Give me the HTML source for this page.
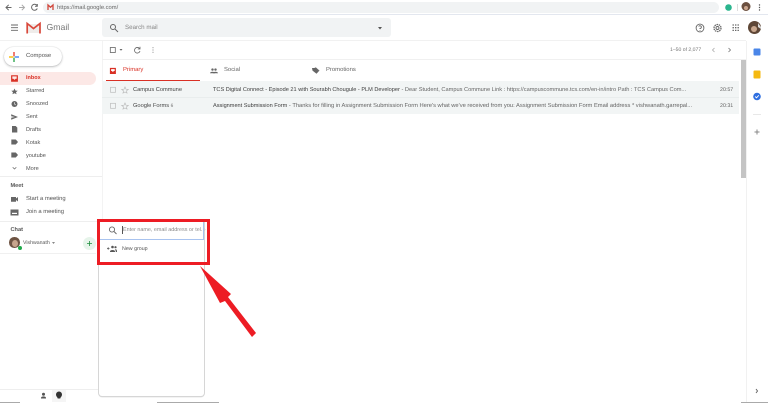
<!DOCTYPE html>
<html><head><meta charset="utf-8"><style>
html,body{margin:0;padding:0;width:768px;height:403px;overflow:hidden;background:#fff}
body{position:relative;font-family:"Liberation Sans",sans-serif;color:#555;text-rendering:geometricPrecision}
#w{position:absolute;left:0;top:0;width:768px;height:403px;filter:blur(.3px);overflow:hidden}
.a{position:absolute}
.t{position:absolute;white-space:nowrap;font-size:5.600px;line-height:8px;color:#555}
svg{position:absolute;overflow:visible}
</style></head><body><div id="w">
<!-- browser bar -->
<div class="a" style="left:43px;top:2px;width:676px;height:11px;background:#f1f3f4;border-radius:6px"></div>
<div class="a" style="left:0;top:14px;width:768px;height:1px;background:#e3e7ef"></div>
<svg width="768" height="15" style="left:0;top:0" fill="none" stroke="#666" stroke-width="1">
<path d="M11.500 7.500H6M8.700 4.800L6 7.500L8.700 10.200"/>
<path d="M19 7.500H24.500M21.800 4.800L24.500 7.500L21.800 10.200" stroke="#aaa"/>
<path d="M37 5.500A3 3 0 1 0 37.300 8.500M37.300 4V6.300H35"/>
<path d="M48 10V5L50.500 7.200L53 5V10" stroke="#d0453a" stroke-width="1.300"/>
<circle cx="728.500" cy="7.500" r="3.300" fill="#2bb58e" stroke="none"/>
<path d="M737.500 4V11" stroke="#ddd"/>
<circle cx="746" cy="6.500" r="4.500" fill="#6b5040" stroke="none"/>
<circle cx="746" cy="8" r="2" fill="#caa68e" stroke="none"/>
<circle cx="759.500" cy="5" r=".7" fill="#555" stroke="none"/><circle cx="759.500" cy="7.500" r=".7" fill="#555" stroke="none"/><circle cx="759.500" cy="10" r=".7" fill="#555" stroke="none"/>
</svg>
<div class="t" style="left:57px;top:3.500px;font-size:5.800px;color:#666">https://mail.google.com/</div>
<!-- header -->
<svg width="60" height="20" style="left:0;top:18px" fill="none">
<path d="M11 7H18M11 9.700H18M11 12.300H18" stroke="#666" stroke-width=".9"/>
<path d="M27 15V6H40V15Z" fill="#efecea"/>
<path d="M27.200 15.500V5.500L33.500 10.500L40 5.500V15.500" stroke="#d9483b" stroke-width="1.700"/>
</svg>
<div class="t" style="left:46.500px;top:22px;font-size:8.700px;line-height:11px;color:#777">Gmail</div>
<div class="a" style="left:102px;top:18px;width:289px;height:19px;background:#f1f3f4;border-radius:3px"></div>
<svg width="12" height="12" style="left:107.500px;top:21.500px" fill="none" stroke="#666" stroke-width="1"><circle cx="5" cy="5" r="2.500"/><path d="M7 7L10 10"/></svg>
<div class="t" style="left:125px;top:24px;font-size:6.200px;color:#888">Search mail</div>
<svg width="6" height="4" style="left:377.500px;top:26.500px"><path d="M0 0H4L2 2.500Z" fill="#555"/></svg>
<svg width="80" height="20" style="left:690px;top:18px" fill="none" stroke="#666" stroke-width=".9">
<circle cx="10" cy="10" r="3.900"/><path d="M8.700 8.500A1.400 1.400 0 1 1 10 10.500V11M10 12V12.800"/>
<circle cx="27.500" cy="10" r="1.500"/><circle cx="27.500" cy="10" r="3.500" stroke-dasharray="1.500 .7" stroke-width="1.300"/>
<path d="M42.500 7h1.400M45 7h1.400M47.500 7h1.400M42.500 9.700h1.400M45 9.700h1.400M47.500 9.700h1.400M42.500 12.400h1.400M45 12.400h1.400M47.500 12.400h1.400" stroke-width="1.300"/>
<circle cx="64.500" cy="9.500" r="6.500" fill="#5e4636" stroke="none"/>
<circle cx="64" cy="11" r="3" fill="#c9a78e" stroke="none"/>
<path d="M68 5L71 9V11L68 9Z" fill="#ddd" stroke="none"/>
</svg>
<div class="a" style="left:0;top:40px;width:746px;height:1px;background:#f1f1f1"></div>
<!-- sidebar -->
<div class="a" style="left:3.500px;top:47px;width:58px;height:19px;border-radius:10px;background:#fff;box-shadow:0 1px 2px rgba(60,64,67,.3),0 0 1px rgba(60,64,67,.3)"></div>
<svg width="10" height="10" style="left:9.300px;top:51.500px"><path d="M4.300 0h1.400v4.300H4.300z" fill="#ea4335"/><path d="M5.700 4.300H10v1.400H5.700z" fill="#4285f4"/><path d="M4.300 5.700h1.400V10H4.300z" fill="#34a853"/><path d="M0 4.300h4.300v1.400H0z" fill="#fbbc05"/></svg>
<div class="t" style="left:26px;top:52px;font-size:5.900px;color:#555">Compose</div>
<div class="a" style="left:0;top:72px;width:96px;height:13px;background:#fce8e6;border-radius:0 7px 7px 0"></div>
<svg width="18" height="190" style="left:6.800px;top:70px">
<path d="M4.700 5.800H10.300V11.200H4.700Z" fill="none" stroke="#d93025" stroke-width="1.200"/><path d="M4.700 8.800H6.300L7.500 9.900L8.700 8.800H10.300V11.200H4.700Z" fill="#d93025"/>
<path d="M7.500 18.500L8.500 20.600L10.700 20.800L9 22.200L9.600 24.300L7.500 23.200L5.400 24.300L6 22.200L4.300 20.800L6.500 20.600Z" fill="#666"/>
<circle cx="7.500" cy="34" r="3" fill="#666"/><path d="M7.500 32.300V34L8.700 35" stroke="#fff" stroke-width=".6" fill="none"/>
<path d="M4.200 44.300L11 47L4.200 49.700V47.800L8 47L4.200 46.200Z" fill="#666"/>
<path d="M5 56H8.700L10.300 57.600V62.500H5Z" fill="#666"/>
<path d="M4.300 69.500H8.800L11 72L8.800 74.500H4.300Z" fill="#666"/>
<path d="M4.300 82.500H8.800L11 85L8.800 87.500H4.300Z" fill="#666"/>
<path d="M5.700 97.200L7.500 99L9.300 97.200" fill="none" stroke="#666" stroke-width=".7"/>
<path d="M4 127H9V128.500L11 127V131.500L9 130V131.800H4Z" fill="#666"/>
<path d="M3.500 139.500H11.500V145.500H3.500Z" fill="#666"/><path d="M5 142.800H10V144H5Z" fill="#fff"/>
</svg>
<div class="t" style="left:26px;top:74px;font-weight:bold;color:#d93025;font-size:5.500px">Inbox</div>
<div class="t" style="left:26px;top:87px">Starred</div>
<div class="t" style="left:26px;top:100px">Snoozed</div>
<div class="t" style="left:26px;top:113px">Sent</div>
<div class="t" style="left:26px;top:126px">Drafts</div>
<div class="t" style="left:26px;top:138.500px">Kotak</div>
<div class="t" style="left:26px;top:151.500px">youtube</div>
<div class="t" style="left:26px;top:164.500px">More</div>
<div class="a" style="left:0;top:176px;width:102px;height:1px;background:#eee"></div>
<div class="t" style="left:10.500px;top:181.500px;font-weight:bold;color:#555">Meet</div>
<div class="t" style="left:26px;top:195px;font-size:5.850px">Start a meeting</div>
<div class="t" style="left:26px;top:208px;font-size:5.850px">Join a meeting</div>
<div class="a" style="left:0;top:221px;width:102px;height:1px;background:#eee"></div>
<div class="t" style="left:10.500px;top:226px;font-weight:bold;color:#555">Chat</div>
<div class="a" style="left:9.300px;top:237px;width:10.500px;height:10.500px;border-radius:50%;background:#6e5443"></div>
<div class="a" style="left:12px;top:240px;width:6px;height:7px;border-radius:50%;background:#c7a58d"></div>
<div class="a" style="left:17.500px;top:245.500px;width:4px;height:4px;border-radius:50%;background:#1fa94a"></div>
<div class="t" style="left:23px;top:238.700px;font-size:5.200px">Vishwanath</div>
<svg width="4" height="3" style="left:51.500px;top:242px"><path d="M0 0H3L1.500 2Z" fill="#888"/></svg>
<div class="a" style="left:83px;top:237px;width:13px;height:13px;border-radius:50%;background:#e6f4ea"></div>
<svg width="7" height="7" style="left:86px;top:240px"><path d="M3.500 1V6M1 3.500H6" stroke="#1e8e3e" stroke-width=".8"/></svg>
<div class="a" style="left:0;top:253px;width:96px;height:1px;background:#f0f0f0"></div>
<div class="a" style="left:102px;top:41px;width:1px;height:185px;background:#f3f3f3"></div>
<!-- toolbar -->
<svg width="60" height="14" style="left:106px;top:43px" fill="none" stroke="#666">
<rect x="4.300" y="4.500" width="5" height="5" stroke-width=".8"/>
<path d="M13.500 6H16.500L15 7.700Z" fill="#666" stroke="none"/>
<path d="M33.500 5.500A2.800 2.800 0 1 0 34 8M34 3.800V6H31.800" stroke-width=".8"/>
<circle cx="47" cy="4.700" r=".5" fill="#666" stroke="none"/><circle cx="47" cy="7" r=".5" fill="#666" stroke="none"/><circle cx="47" cy="9.300" r=".5" fill="#666" stroke="none"/>
</svg>
<div class="a" style="left:102px;top:59px;width:644px;height:1px;background:#f0f0f0"></div>
<div class="t" style="left:670px;top:46px;font-size:5.100px;color:#777">1–50 of 2,077</div>
<svg width="50" height="10" style="left:705px;top:45px" fill="none" stroke="#777" stroke-width=".8"><path d="M9.500 3L7.500 5L9.500 7" stroke="#aaa"/><path d="M23.500 3L25.500 5L23.500 7"/></svg>
<!-- tabs -->
<svg width="240" height="12" style="left:105px;top:66px">
<path d="M5.500 2.500H10.300V7.400H5.500Z" fill="none" stroke="#d93025" stroke-width="1.200"/><path d="M5.500 5H6.900L7.900 6L8.900 5H10.300V7.400H5.500Z" fill="#d93025"/>
<g fill="#666"><circle cx="107.500" cy="3.600" r="1.200"/><circle cx="110.500" cy="3.600" r="1.200"/><path d="M105 7.300C105 5.300 110 5.300 110 7.300Z"/><path d="M108 7.300C108 5.300 113 5.300 113 7.300Z"/>
<path d="M207 2H210.500L213.800 5.300L211.500 7.800L207.500 4.600Z"/><path d="M209.500 1.500H211L214.500 4.600L213.800 5.300Z"/></g>
</svg>
<div class="t" style="left:123px;top:66px;color:#d93025;font-size:5.900px">Primary</div>
<div class="t" style="left:224px;top:66px;color:#666;font-size:5.900px">Social</div>
<div class="t" style="left:326px;top:66px;color:#666;font-size:5.900px">Promotions</div>
<div class="a" style="left:106px;top:80px;width:93.500px;height:1.200px;background:#d93025"></div>
<!-- rows -->
<div class="a" style="left:102px;top:81px;width:637px;height:16px;background:#f2f5f5;border-bottom:1px solid #e9eded"></div>
<div class="a" style="left:102px;top:98px;width:637px;height:15.500px;background:#f2f5f5"></div>
<svg width="30" height="40" style="left:106px;top:82px" fill="none" stroke="#bbb" stroke-width=".7">
<rect x="4.500" y="5.300" width="5" height="5"/><rect x="4.500" y="21.300" width="5" height="5"/>
<path d="M19 5L20 7.200L22.300 7.400L20.500 8.900L21 11.100L19 10L17 11.100L17.500 8.900L15.700 7.400L18 7.200Z"/>
<path d="M19 21L20 23.200L22.300 23.400L20.500 24.900L21 27.100L19 26L17 27.100L17.500 24.900L15.700 23.400L18 23.200Z"/>
</svg>
<div class="t" style="left:133px;top:85.500px;color:#444;font-size:5.700px">Campus Commune</div>
<div class="t" style="left:133px;top:101.500px;color:#444;font-size:5.700px">Google Forms <span style="font-size:4.800px;color:#777">6</span></div>
<div class="t" style="left:213px;top:85.500px;color:#666;font-size:5.670px"><span style="color:#3c3c3c;font-size:5.600px">TCS Digital Connect - Episode 21 with Sourabh Chougule - PLM Developer</span> - Dear Student, Campus Commune Link : https://campuscommune.tcs.com/en-in/intro Path : TCS Campus Com...</div>
<div class="t" style="left:213px;top:101.500px;color:#666;font-size:5.760px"><span style="color:#3c3c3c;font-size:5.600px">Assignment Submission Form</span> - Thanks for filling in Assignment Submission Form Here's what we've received from you: Assignment Submission Form Email address * vishwanath.garrepal...</div>
<div class="t" style="left:720px;top:85.500px;font-size:5.300px;color:#666">20:57</div>
<div class="t" style="left:720px;top:101.500px;font-size:5.300px;color:#666">20:31</div>
<!-- scrollbar & right panel -->
<div class="a" style="left:741px;top:60px;width:5px;height:118px;background:#c4c4c4"></div>
<div class="a" style="left:746px;top:41px;width:1px;height:362px;background:#f1f1f1"></div>
<svg width="22" height="360" style="left:746px;top:41px" fill="none">
<rect x="7.500" y="7.500" width="7" height="7" rx="1" fill="#4a86e8"/>
<rect x="7.500" y="29.500" width="7" height="8" rx="1" fill="#f5b910"/>
<circle cx="11" cy="55.500" r="3.800" fill="#2f6fe0"/><path d="M9.200 55.500L10.500 56.800L12.800 54.300" stroke="#fff" stroke-width=".9"/>
<path d="M7 73.500H15" stroke="#e8e8e8"/>
<path d="M11 88.500V93.500M8.500 91H13.500" stroke="#888"/>
<path d="M10 348L11.500 350L10 352" stroke="#666"/>
</svg>
<!-- bottom strip -->
<div class="a" style="left:0;top:389px;width:98px;height:1px;background:#eee"></div>
<div class="a" style="left:52px;top:390px;width:14px;height:12px;background:#f5f5f5"></div>
<svg width="30" height="12" style="left:38px;top:390px" fill="#555"><circle cx="5.500" cy="4.200" r="1.500"/><path d="M3 8C3 5.800 8 5.800 8 8V8.500H3Z"/><path d="M18 4.500A3 3 0 0 1 24 4.500C24 6.500 22.500 7 22.300 8.500H19.700C19.500 7 18 6.500 18 4.500Z" fill="#333"/></svg>
<div class="a" style="left:0;top:402px;width:20px;height:1px;background:#aaa"></div>
<div class="a" style="left:157px;top:402px;width:62px;height:1px;background:#aaa"></div>
<div class="a" style="left:741px;top:402px;width:27px;height:1px;background:#aaa"></div>
<!-- popup -->
<div class="a" style="left:99px;top:220px;width:104.500px;height:176px;background:#fff;border-radius:0 0 3px 3px;box-shadow:0 0 0 1px #d6d6d6,0 1px 1px rgba(0,0,0,.3)"></div>
<svg width="12" height="12" style="left:107px;top:224.500px" fill="none" stroke="#666" stroke-width=".9"><circle cx="5" cy="4.500" r="2.600"/><path d="M7 6.500L9.500 9"/></svg>
<div class="a" style="left:122px;top:226px;width:.8px;height:8px;background:#555"></div>
<div class="t" style="left:123px;top:226px;font-size:5.400px;color:#888">Enter name, email address or tel. <span style="color:#bbb">›</span></div>
<div class="a" style="left:100px;top:238.800px;width:103.500px;height:.8px;background:#a8c3ef"></div>
<div class="a" style="left:203px;top:222px;width:.8px;height:17px;background:#a8c3ef"></div>
<svg width="14" height="9" style="left:105.500px;top:244.500px" fill="#555"><circle cx="6.500" cy="2" r="1.300"/><circle cx="9.500" cy="2.200" r="1.100"/><path d="M4 6.500C4 4.500 9 4.500 9 6.500V7H4Z"/><path d="M9.500 4.200C10.500 4.200 11 5 11 7H9.800C9.800 5.800 9.500 5.200 9 4.800Z"/><path d="M1 3.500H3.500M2.200 2.300V4.700" stroke="#555" stroke-width=".7"/></svg>
<div class="t" style="left:122px;top:244.500px;color:#555;font-size:5.300px">New group</div>
<!-- annotation -->
<div class="a" style="left:97px;top:219px;width:107px;height:40px;border:3px solid #ed1c24"></div>
<svg width="768" height="403" style="left:0;top:0"><path d="M200 266L231 294L228 297L256 333L252 337L225 301L220 303Z" fill="#ed1c24"/></svg>
</div></body></html>
